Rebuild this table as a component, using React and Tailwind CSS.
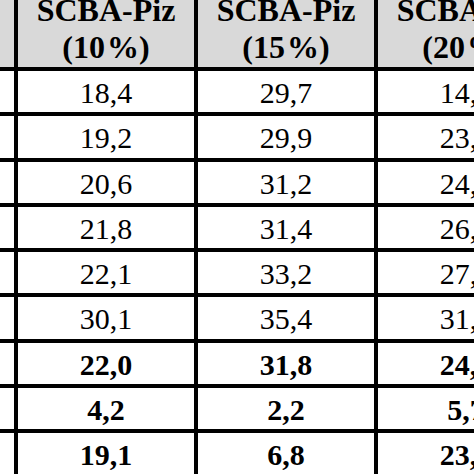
import React from 'react';

const headers = ['10%', '15%', '20%'];

const rows = [
  { vals: ['18,4', '29,7', '14,5'] },
  { vals: ['19,2', '29,9', '23,1'] },
  { vals: ['20,6', '31,2', '24,3'] },
  { vals: ['21,8', '31,4', '26,0'] },
  { vals: ['22,1', '33,2', '27,2'] },
  { vals: ['30,1', '35,4', '31,0'] },
  { vals: ['22,0', '31,8', '24,4'], bold: true },
  { vals: ['4,2', '2,2', '5,7'], bold: true },
  { vals: ['19,1', '6,8', '23,4'], bold: true },
];

export default function App() {
  return (
    <div className="w-[474px] h-[474px] overflow-hidden bg-white">
      <div
        className="ml-[-86px] mt-[-12px] grid grid-cols-[100px_176px_176px_176px] gap-[4px] bg-black w-max text-black"
        style={{ fontFamily: '"Liberation Serif", "Times New Roman", serif' }}
      >
        {/* header */}
        <div className="h-[79px] bg-[#d9d9d9]" />
        {headers.map((h) => (
          <div
            key={h}
            className="h-[79px] bg-[#d9d9d9] flex flex-col items-center justify-end pb-[1px] text-[32px] leading-[37px] font-bold"
          >
            <span>SCBA-Piz</span>
            <span>({h.replace('%', '')}<span className="ml-[2px]">%</span>)</span>
          </div>
        ))}

        {/* body */}
        {rows.map((r, i) => (
          <React.Fragment key={i}>
            <div className="h-[41.25px] bg-white" />
            {r.vals.map((v, j) => (
              <div
                key={j}
                className={`h-[41.25px] bg-white flex items-center justify-center pt-[3px] text-[30px] leading-[30px] ${
                  r.bold ? 'font-bold' : 'font-normal'
                }`}
              >
                {v}
              </div>
            ))}
          </React.Fragment>
        ))}
      </div>
    </div>
  );
}
